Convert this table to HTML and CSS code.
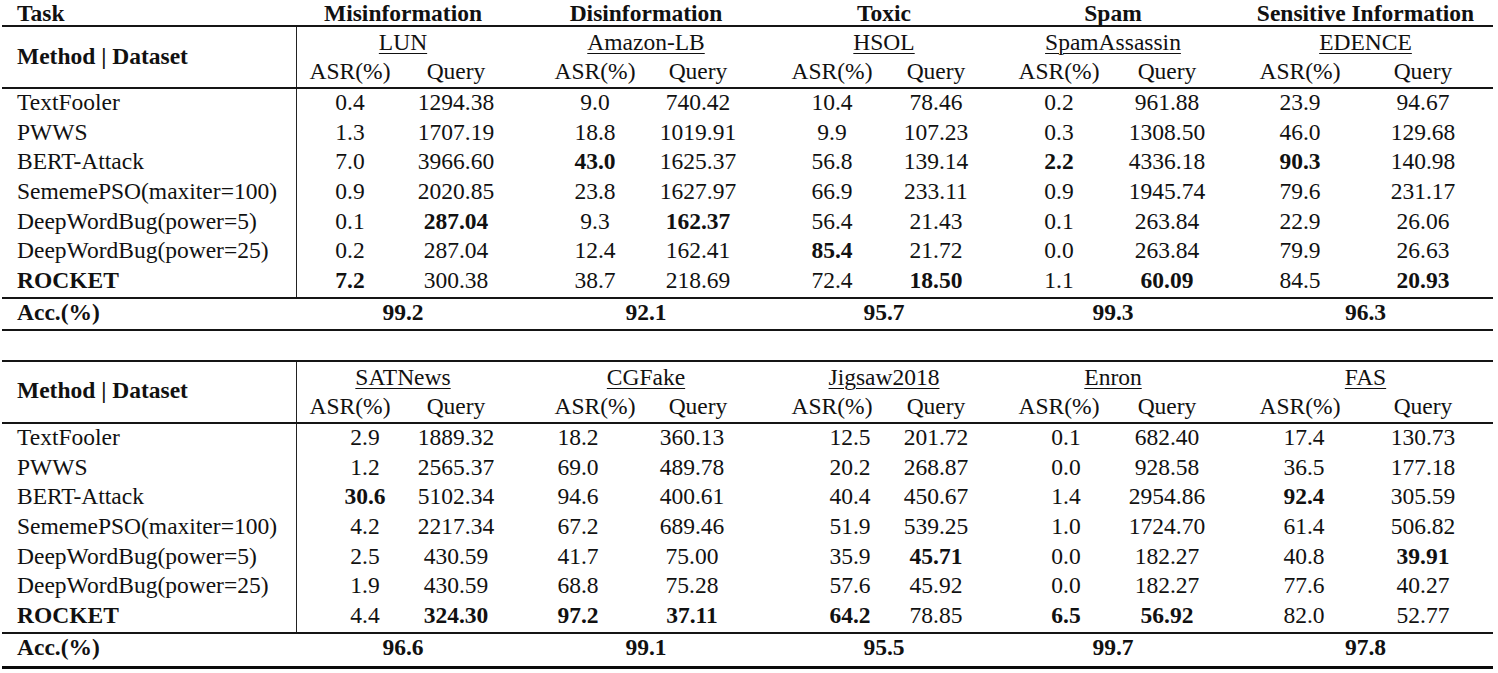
FILE: index.html
```html
<!DOCTYPE html>
<html lang="en">
<head>
<meta charset="utf-8">
<title>ROCKET results</title>
<link rel="stylesheet" href="styles.css">
</head>
<body>
<div class="sheet">
  <section class="tbl t1">
    <div class="row task">
      <div class="m">Task</div>
      <div class="g g1">Misinformation</div>
      <div class="g g2">Disinformation</div>
      <div class="g g3">Toxic</div>
      <div class="g g4">Spam</div>
      <div class="g g5">Sensitive Information</div>
    </div>
    <div class="row head">
      <div class="m mh">Method | Dataset</div>
      <div class="g g1 ds"><span class="u">LUN</span></div>
      <div class="g g2 ds"><span class="u">Amazon-LB</span></div>
      <div class="g g3 ds"><span class="u">HSOL</span></div>
      <div class="g g4 ds"><span class="u">SpamAssassin</span></div>
      <div class="g g5 ds"><span class="u">EDENCE</span></div>
      <div class="a1">ASR(%)</div><div class="q1">Query</div>
      <div class="a2">ASR(%)</div><div class="q2">Query</div>
      <div class="a3">ASR(%)</div><div class="q3">Query</div>
      <div class="a4">ASR(%)</div><div class="q4">Query</div>
      <div class="a5">ASR(%)</div><div class="q5">Query</div>
    </div>
    <div class="row r">
      <div class="m">TextFooler</div>
      <div class="a1">0.4</div><div class="q1">1294.38</div>
      <div class="a2">9.0</div><div class="q2">740.42</div>
      <div class="a3">10.4</div><div class="q3">78.46</div>
      <div class="a4">0.2</div><div class="q4">961.88</div>
      <div class="a5">23.9</div><div class="q5">94.67</div>
    </div>
    <div class="row r">
      <div class="m">PWWS</div>
      <div class="a1">1.3</div><div class="q1">1707.19</div>
      <div class="a2">18.8</div><div class="q2">1019.91</div>
      <div class="a3">9.9</div><div class="q3">107.23</div>
      <div class="a4">0.3</div><div class="q4">1308.50</div>
      <div class="a5">46.0</div><div class="q5">129.68</div>
    </div>
    <div class="row r">
      <div class="m">BERT-Attack</div>
      <div class="a1">7.0</div><div class="q1">3966.60</div>
      <div class="a2"><b>43.0</b></div><div class="q2">1625.37</div>
      <div class="a3">56.8</div><div class="q3">139.14</div>
      <div class="a4"><b>2.2</b></div><div class="q4">4336.18</div>
      <div class="a5"><b>90.3</b></div><div class="q5">140.98</div>
    </div>
    <div class="row r">
      <div class="m">SememePSO(maxiter=100)</div>
      <div class="a1">0.9</div><div class="q1">2020.85</div>
      <div class="a2">23.8</div><div class="q2">1627.97</div>
      <div class="a3">66.9</div><div class="q3">233.11</div>
      <div class="a4">0.9</div><div class="q4">1945.74</div>
      <div class="a5">79.6</div><div class="q5">231.17</div>
    </div>
    <div class="row r">
      <div class="m">DeepWordBug(power=5)</div>
      <div class="a1">0.1</div><div class="q1"><b>287.04</b></div>
      <div class="a2">9.3</div><div class="q2"><b>162.37</b></div>
      <div class="a3">56.4</div><div class="q3">21.43</div>
      <div class="a4">0.1</div><div class="q4">263.84</div>
      <div class="a5">22.9</div><div class="q5">26.06</div>
    </div>
    <div class="row r">
      <div class="m">DeepWordBug(power=25)</div>
      <div class="a1">0.2</div><div class="q1">287.04</div>
      <div class="a2">12.4</div><div class="q2">162.41</div>
      <div class="a3"><b>85.4</b></div><div class="q3">21.72</div>
      <div class="a4">0.0</div><div class="q4">263.84</div>
      <div class="a5">79.9</div><div class="q5">26.63</div>
    </div>
    <div class="row r last">
      <div class="m"><b>ROCKET</b></div>
      <div class="a1"><b>7.2</b></div><div class="q1">300.38</div>
      <div class="a2">38.7</div><div class="q2">218.69</div>
      <div class="a3">72.4</div><div class="q3"><b>18.50</b></div>
      <div class="a4">1.1</div><div class="q4"><b>60.09</b></div>
      <div class="a5">84.5</div><div class="q5"><b>20.93</b></div>
    </div>
    <div class="row acc">
      <div class="m">Acc.(%)</div>
      <div class="g g1">99.2</div>
      <div class="g g2">92.1</div>
      <div class="g g3">95.7</div>
      <div class="g g4">99.3</div>
      <div class="g g5">96.3</div>
    </div>
  </section>

  <section class="tbl t2">
    <div class="row head">
      <div class="m mh">Method | Dataset</div>
      <div class="g g1 ds"><span class="u">SATNews</span></div>
      <div class="g g2 ds"><span class="u">CGFake</span></div>
      <div class="g g3 ds"><span class="u">Jigsaw2018</span></div>
      <div class="g g4 ds"><span class="u">Enron</span></div>
      <div class="g g5 ds"><span class="u">FAS</span></div>
      <div class="a1">ASR(%)</div><div class="q1">Query</div>
      <div class="a2">ASR(%)</div><div class="q2">Query</div>
      <div class="a3">ASR(%)</div><div class="q3">Query</div>
      <div class="a4">ASR(%)</div><div class="q4">Query</div>
      <div class="a5">ASR(%)</div><div class="q5">Query</div>
    </div>
    <div class="row r">
      <div class="m">TextFooler</div>
      <div class="a1">2.9</div><div class="q1">1889.32</div>
      <div class="a2">18.2</div><div class="q2">360.13</div>
      <div class="a3">12.5</div><div class="q3">201.72</div>
      <div class="a4">0.1</div><div class="q4">682.40</div>
      <div class="a5">17.4</div><div class="q5">130.73</div>
    </div>
    <div class="row r">
      <div class="m">PWWS</div>
      <div class="a1">1.2</div><div class="q1">2565.37</div>
      <div class="a2">69.0</div><div class="q2">489.78</div>
      <div class="a3">20.2</div><div class="q3">268.87</div>
      <div class="a4">0.0</div><div class="q4">928.58</div>
      <div class="a5">36.5</div><div class="q5">177.18</div>
    </div>
    <div class="row r">
      <div class="m">BERT-Attack</div>
      <div class="a1"><b>30.6</b></div><div class="q1">5102.34</div>
      <div class="a2">94.6</div><div class="q2">400.61</div>
      <div class="a3">40.4</div><div class="q3">450.67</div>
      <div class="a4">1.4</div><div class="q4">2954.86</div>
      <div class="a5"><b>92.4</b></div><div class="q5">305.59</div>
    </div>
    <div class="row r">
      <div class="m">SememePSO(maxiter=100)</div>
      <div class="a1">4.2</div><div class="q1">2217.34</div>
      <div class="a2">67.2</div><div class="q2">689.46</div>
      <div class="a3">51.9</div><div class="q3">539.25</div>
      <div class="a4">1.0</div><div class="q4">1724.70</div>
      <div class="a5">61.4</div><div class="q5">506.82</div>
    </div>
    <div class="row r">
      <div class="m">DeepWordBug(power=5)</div>
      <div class="a1">2.5</div><div class="q1">430.59</div>
      <div class="a2">41.7</div><div class="q2">75.00</div>
      <div class="a3">35.9</div><div class="q3"><b>45.71</b></div>
      <div class="a4">0.0</div><div class="q4">182.27</div>
      <div class="a5">40.8</div><div class="q5"><b>39.91</b></div>
    </div>
    <div class="row r">
      <div class="m">DeepWordBug(power=25)</div>
      <div class="a1">1.9</div><div class="q1">430.59</div>
      <div class="a2">68.8</div><div class="q2">75.28</div>
      <div class="a3">57.6</div><div class="q3">45.92</div>
      <div class="a4">0.0</div><div class="q4">182.27</div>
      <div class="a5">77.6</div><div class="q5">40.27</div>
    </div>
    <div class="row r last">
      <div class="m"><b>ROCKET</b></div>
      <div class="a1">4.4</div><div class="q1"><b>324.30</b></div>
      <div class="a2"><b>97.2</b></div><div class="q2"><b>37.11</b></div>
      <div class="a3"><b>64.2</b></div><div class="q3">78.85</div>
      <div class="a4"><b>6.5</b></div><div class="q4"><b>56.92</b></div>
      <div class="a5">82.0</div><div class="q5">52.77</div>
    </div>
    <div class="row acc">
      <div class="m">Acc.(%)</div>
      <div class="g g1">96.6</div>
      <div class="g g2">99.1</div>
      <div class="g g3">95.5</div>
      <div class="g g4">99.7</div>
      <div class="g g5">97.8</div>
    </div>
  </section>
</div>
</body>
</html>
```

FILE: styles.css
```css
* {
  box-sizing: border-box;
}

html, body {
  margin: 0;
  padding: 0;
  background: #ffffff;
}

body {
  color: #111111;
  font-family: "Liberation Serif", "Times New Roman", serif;
  font-size: 23.5px;
}

.sheet {
  margin-left: 2px;
  width: 1491px;
}

.row {
  display: grid;
  grid-template-columns: 295px 106px 106px 138px 102px 135px 104px 125px 108px 141px 131px;
  text-align: center;
  white-space: nowrap;
}

.row > div {
  min-width: 0;
}

b {
  font-weight: bold;
}

/* column offsets */
.g {
  grid-column: span 2;
}
.a2, .g2 { padding-left: 34px; }
.a3, .g3 { padding-left: 31px; }
.a4, .g4 { padding-left: 17px; }
.a5, .g5 { padding-left: 17px; }
.q5 { padding-right: 9px; }

/* numeric alignment of the second table's columns */
.t2 .r .a1 { padding-left: 30px; }
.t2 .r .a2 { padding-left: 0; }
.t2 .r .q2 { padding-right: 12px; }
.t2 .r .a3 { padding-left: 67px; }
.t2 .r .a4 { padding-left: 31px; }
.t2 .r .a5 { padding-left: 25px; }

.m {
  text-align: left;
  padding-left: 15px;
}

/* task row */
.task {
  height: 27px;
  line-height: 26px;
  font-weight: bold;
  border-bottom: 2px solid #151515;
}

/* header block */
.head {
  grid-template-rows: 30px 30px;
  height: 62px;
  line-height: 28px;
  border-bottom: 2px solid #151515;
}
.head .mh {
  grid-row: 1 / 3;
  align-self: stretch;
  display: flex;
  align-items: center;
  padding-bottom: 3px;
  font-weight: bold;
  border-right: 1px solid #222222;
}
.head .ds {
  padding-top: 1px;
}
.u {
  text-decoration: underline;
  text-decoration-thickness: 1px;
  text-underline-offset: 3px;
}

/* data rows */
.r {
  height: 29.7px;
  line-height: 27px;
}
.r .m {
  border-right: 1px solid #222222;
}
.r.last {
  height: 31.7px;
  border-bottom: 2px solid #151515;
}

/* accuracy row */
.acc {
  line-height: 26px;
  font-weight: bold;
}
.t1 .acc {
  height: 32px;
  border-bottom: 2px solid #151515;
}
.t2 {
  margin-top: 29px;
  border-top: 2px solid #151515;
}
.t2 .acc {
  height: 35px;
  border-bottom: 3px solid #0a0a0a;
}
```
